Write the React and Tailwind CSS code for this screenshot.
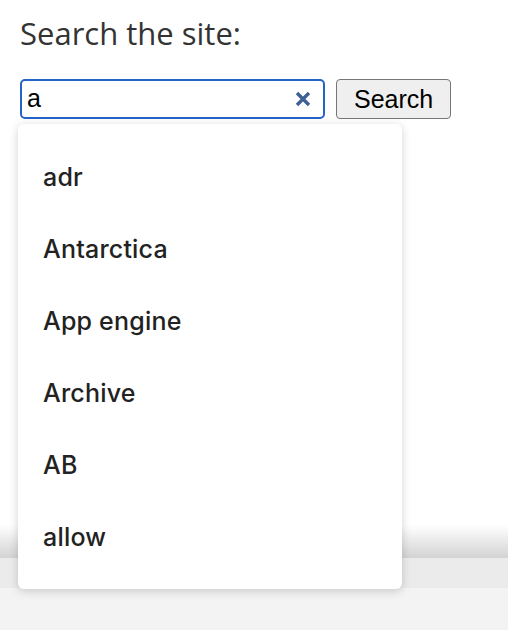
import React, { useState } from 'react';

const suggestions = ['adr', 'Antarctica', 'App engine', 'Archive', 'AB', 'allow'];

const ClearIcon = () => (
  <svg width="20" height="20" viewBox="0 0 20 20" className="text-[#3f5f95]">
    <path d="M4 4 L16 16 M16 4 L4 16" stroke="currentColor" strokeWidth="3.4" strokeLinecap="butt" />
  </svg>
);

const App = () => {
  const [query, setQuery] = useState('a');

  return (
    <div className="w-[508px] h-[630px] overflow-hidden bg-white flex flex-col">
      {/* Page body */}
      <div className="relative flex-1 px-5 pt-[13px]">
        <h2 className="text-[31px] leading-[40px] text-[#333] font-['Open_Sans',sans-serif]">
          Search the site:
        </h2>

        <div className="relative mt-[26px] flex items-start gap-[11px]">
          <div className="relative w-[305px] h-10 border-2 border-[#2563c9] rounded-[5px] flex items-center pl-[5px] pr-[10px]">
            <input
              value={query}
              onChange={(e) => setQuery(e.target.value)}
              className="flex-1 min-w-0 outline-none bg-transparent text-[25px] text-black font-['Liberation_Sans',Arial,sans-serif] caret-black"
            />
            <ClearIcon />
          </div>
          <button className="h-10 px-[17px] border border-[#767676] rounded-[4px] bg-[#efefef] text-[25px] leading-none text-black font-['Liberation_Sans',Arial,sans-serif]">
            Search
          </button>

          {/* Suggestions dropdown */}
          <ul className="absolute left-[-2px] top-[45px] z-10 w-[384px] bg-white rounded-[6px] shadow-[0_2px_10px_rgba(0,0,0,0.18)] pt-[18px] pb-[15px]">
            {suggestions.map((s) => (
              <li
                key={s}
                className="h-[72px] flex items-center px-[25px] text-[25px] font-medium text-[#222] font-['Inter',sans-serif] tracking-[0.2px]"
              >
                {s}
              </li>
            ))}
          </ul>
        </div>
      </div>

      {/* Bottom chrome */}
      <div className="h-[33px] bg-gradient-to-b from-white to-[#d3d3d3]" />
      <div className="h-[30px] bg-[#ebebeb]" />
      <div className="h-[42px] bg-[#f3f3f3]" />
    </div>
  );
};

export default App;
